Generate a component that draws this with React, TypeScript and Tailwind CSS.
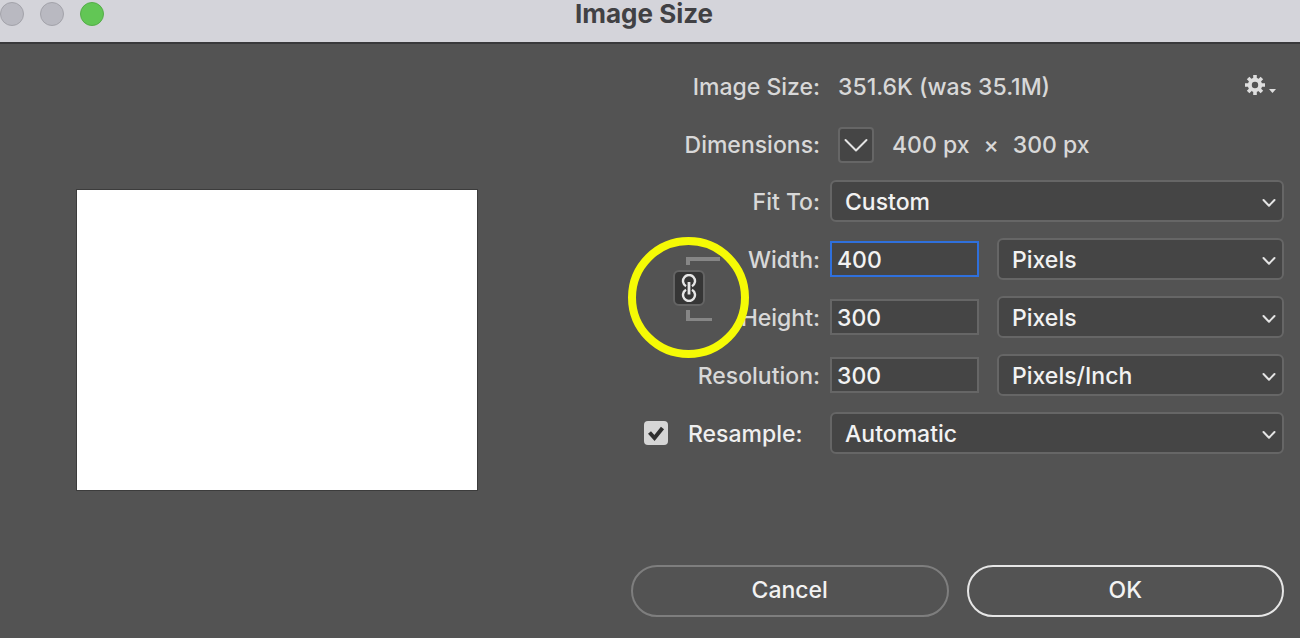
import { useState } from 'react'
import type { ReactNode } from 'react'

const units = ['Pixels', 'Percent', 'Inches', 'Centimeters']
const resolutionUnits = ['Pixels/Inch', 'Pixels/Centimeter']

function Chevron() {
  return (
    <svg viewBox="0 0 14 9" className="pointer-events-none absolute right-2 top-[18px] h-[9px] w-3.5" fill="none" stroke="#e4e4e4" strokeWidth="2" strokeLinecap="round" strokeLinejoin="round">
      <path d="M1.5 2 7 7.7 12.5 2" />
    </svg>
  )
}

function Dropdown({ id, label, options }: { id: string; label?: string; options: string[] }) {
  return (
    <div className="relative min-w-0 flex-1">
      <select
        id={id}
        aria-label={label}
        className="block h-[42px] w-full appearance-none rounded-md border-2 border-[#666666] bg-[#454545] pl-[13px] pr-8 pt-0.5 text-[#f2f2f2] outline-none"
      >
        {options.map((option) => (
          <option key={option}>{option}</option>
        ))}
      </select>
      <Chevron />
    </div>
  )
}

function NumberField({ id, initial, active }: { id: string; initial: string; active?: boolean }) {
  const [value, setValue] = useState(initial)

  return (
    <input
      id={id}
      type="text"
      inputMode="numeric"
      value={value}
      onChange={(e) => setValue(e.target.value)}
      className={`h-9 w-[149px] border-2 bg-[#454545] px-[5px] pt-0.5 text-[#f2f2f2] outline-none ${active ? 'border-[#2f70dc]' : 'border-[#666666]'}`}
    />
  )
}

function Row({ label, htmlFor, children }: { label: string; htmlFor?: string; children: ReactNode }) {
  return (
    <div className="flex h-[42px] items-center gap-2.5">
      {htmlFor ? (
        <label htmlFor={htmlFor} className="w-[189px] shrink-0 pt-0.5 text-right">{label}</label>
      ) : (
        <span className="w-[189px] shrink-0 text-right">{label}</span>
      )}
      <div className="flex min-w-0 flex-1 items-center gap-[18px]">{children}</div>
    </div>
  )
}

function GearIcon() {
  return (
    <svg viewBox="0 0 20 20" className="h-5 w-5" fill="none" stroke="#dedede">
      <circle cx="10" cy="10" r="5.2" strokeWidth="4" />
      <g strokeWidth="3.6">
        <path d="M10 0v4M10 16v4M0 10h4M16 10h4" />
        <path d="M3.1 3.1 5.6 5.6M14.4 14.4l2.5 2.5M3.1 16.9l2.5-2.5M14.4 5.6l2.5-2.5" />
      </g>
    </svg>
  )
}

function LinkIcon() {
  return (
    <svg viewBox="0 0 16 28" className="h-7 w-4" fill="none" stroke="#e6e6e6" strokeWidth="2.4">
      <path d="M5 12.2A6 6 0 1 1 11 12.2" />
      <path d="M5 15.8A6 6 0 1 0 11 15.8" />
      <path d="M8 8v12.5" strokeWidth="2.8" />
    </svg>
  )
}

export default function App() {
  const [linked, setLinked] = useState(true)
  const [resample, setResample] = useState(true)

  return (
    <div className="flex min-h-screen flex-col bg-[#535353] font-['Inter','Liberation_Sans',sans-serif] text-[23px] leading-7 font-medium text-[#d8d8d8]">
      {/* Title bar */}
      <header className="grid h-11 shrink-0 grid-cols-[1fr_auto_1fr] border-b-2 border-[#39393b] bg-[#d4d4da]">
        <div className="flex gap-4 pt-0.5">
          <button type="button" aria-label="Close" className="h-6 w-6 rounded-full border border-[#a3a3aa] bg-[#b9b9c1]" />
          <button type="button" aria-label="Minimize" className="h-6 w-6 rounded-full border border-[#a3a3aa] bg-[#b9b9c1]" />
          <button type="button" aria-label="Zoom" className="h-6 w-6 rounded-full border border-[#55ad49] bg-[#62c655]" />
        </div>
        <h1 className="pr-3 text-[26px] leading-7 font-bold text-[#414144]">Image Size</h1>
      </header>

      <main className="flex flex-1">
        {/* Preview */}
        <div className="flex flex-1 items-center justify-center pb-0.5 pr-[78px]">
          <div className="h-[302px] w-[402px] border border-[#3c3c3c] bg-white" />
        </div>

        <form className="mr-4 flex w-[653px] shrink-0 flex-col pb-[21px] pt-[22px]" onSubmit={(e) => e.preventDefault()}>
          <div className="flex flex-col gap-4">
            <Row label="Image Size:">
              <span className="pl-2">351.6K (was 35.1M)</span>
              <button type="button" aria-label="Options" className="mb-1 ml-auto mr-2 flex items-end gap-1">
                <GearIcon />
                <svg viewBox="0 0 7 7" className="h-[7px] w-[7px]" fill="#dedede">
                  <path d="M0 1h7L3.5 5z" />
                </svg>
              </button>
            </Row>

            <div className="-mb-0.5">
              <Row label="Dimensions:">
                <button type="button" aria-label="Dimension units" className="ml-2 flex h-9 w-9 items-center justify-center rounded-sm border-2 border-[#666666] bg-[#454545]">
                  <svg viewBox="0 0 24 14" className="h-3.5 w-6 shrink-0" fill="none" stroke="#e4e4e4" strokeWidth="2" strokeLinecap="round" strokeLinejoin="round">
                    <path d="M1.5 2 12 12.5 22.5 2" />
                  </svg>
                </button>
                <span className="flex gap-3.5">
                  <span>400 px</span>
                  <span>×</span>
                  <span>300 px</span>
                </span>
              </Row>
            </div>

            <Row label="Fit To:" htmlFor="fit">
              <Dropdown id="fit" options={['Custom', 'Original Size', 'Auto Resolution']} />
            </Row>

            <div className="relative flex flex-col gap-4">
              <Row label="Width:" htmlFor="width">
                <NumberField id="width" initial="400" active />
                <Dropdown id="width-unit" label="Width unit" options={units} />
              </Row>
              <Row label="Height:" htmlFor="height">
                <NumberField id="height" initial="300" />
                <Dropdown id="height-unit" label="Height unit" options={units} />
              </Row>

              {/* Constrain proportions, ringed */}
              <div className="absolute -left-[3px] -top-px flex h-[121px] w-[121px] flex-col items-center rounded-full border-8 border-[#f5fa05] pt-3">
                <svg viewBox="0 0 34 8" className="ml-[29px] h-2 w-[34px] shrink-0" fill="#868686">
                  <path d="M0 0h34v4H4v4H0z" />
                </svg>
                <button
                  type="button"
                  aria-label="Constrain proportions"
                  aria-pressed={linked}
                  onClick={() => setLinked(!linked)}
                  className="mt-[5px] flex h-9 w-8 shrink-0 items-center justify-center rounded-md border-2 border-[#646464] bg-[#363636]"
                >
                  <LinkIcon />
                </button>
                <svg viewBox="0 0 26 11" className="ml-[21px] mt-1 h-[11px] w-[26px] shrink-0" fill="#868686">
                  <path d="M0 0h4v8h22v3H0z" />
                </svg>
              </div>
            </div>

            <Row label="Resolution:" htmlFor="resolution">
              <NumberField id="resolution" initial="300" />
              <Dropdown id="resolution-unit" label="Resolution unit" options={resolutionUnits} />
            </Row>

            <div className="flex h-[42px] items-center gap-2.5">
              <label className="flex w-[189px] shrink-0 items-center gap-5 pl-[13px] text-[#efefef]">
                <span className="relative h-6 w-6">
                  <input
                    type="checkbox"
                    checked={resample}
                    onChange={(e) => setResample(e.target.checked)}
                    className="block h-6 w-6 appearance-none rounded bg-[#d6d6d6]"
                  />
                  {resample && (
                    <svg viewBox="0 0 24 24" className="pointer-events-none absolute inset-0 h-6 w-6" fill="none" stroke="#303030" strokeWidth="4">
                      <path d="M5.5 11.5 10.5 17 18.5 7" />
                    </svg>
                  )}
                </span>
                <span className="pt-0.5">Resample:</span>
              </label>
              <Dropdown id="resample-method" label="Resample method" options={['Automatic', 'Preserve Details', 'Bicubic', 'Bilinear']} />
            </div>
          </div>

          <div className="mt-auto grid grid-cols-2 gap-[18px] text-[#f2f2f2]">
            <button type="button" className="h-[52px] rounded-full border-2 border-[#7e7e7e] pb-0.5">Cancel</button>
            <button type="submit" className="h-[52px] rounded-full border-2 border-[#e6e6e6] pb-0.5">OK</button>
          </div>
        </form>
      </main>
    </div>
  )
}
